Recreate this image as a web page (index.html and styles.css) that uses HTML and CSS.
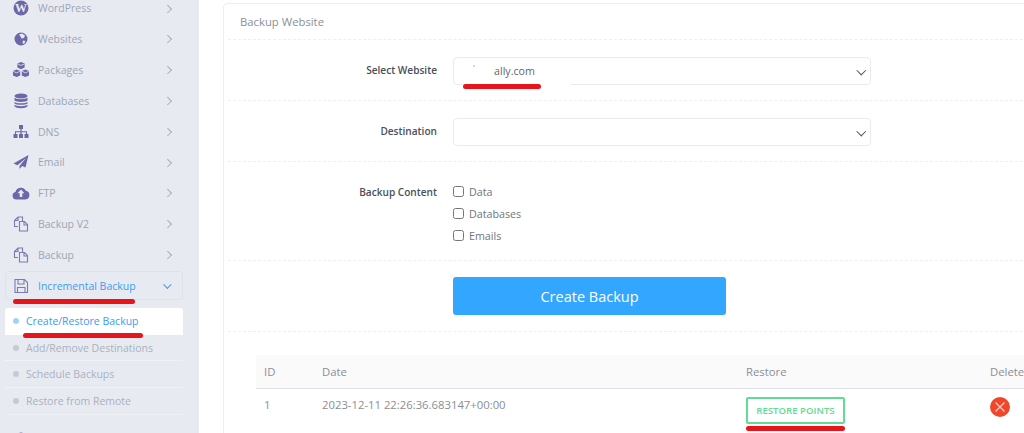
FILE: index.html
```html
<!DOCTYPE html>
<html lang="en">
<head>
<meta charset="utf-8">
<title>Backup Website</title>
<link rel="stylesheet" href="styles.css">
</head>
<body>
<div class="app">
  <aside class="sidebar">
    <nav class="nav">
      <a class="item"><svg class="ico" viewBox="0 0 16 16"><circle cx="8" cy="8" r="7.5"/><text x="8" y="12" class="wp">W</text></svg><span class="lbl">WordPress</span><span class="chev"></span></a>
      <a class="item"><svg class="ico" viewBox="0 0 16 16"><circle cx="8" cy="8" r="6.5"/><path class="cut" d="M6 3.500l3-1 3 2-1 2.500-2.500.5-1-2zM10 9.500l2.500.5-1.500 3-1.500-1z"/></svg><span class="lbl">Websites</span><span class="chev"></span></a>
      <a class="item"><svg class="ico wide" viewBox="0 0 18 16"><path d="M9 0l3.600 1.600v4L9 7.200 5.400 5.600v-4zM4.600 7.400l3.600 1.600v4.400L4.600 15 1 13.400V9zM13.400 7.400L17 9v4.400L13.400 15l-3.600-1.600V9z"/><path class="seam" d="M5.800 2L9 3.400 12.200 2M1.400 9.400l3.200 1.400 3.200-1.400M10.200 9.400l3.200 1.400 3.200-1.400"/></svg><span class="lbl">Packages</span><span class="chev"></span></a>
      <a class="item"><svg class="ico" viewBox="0 0 16 16"><ellipse cx="8" cy="3" rx="6.500" ry="2.600"/><path d="M1.500 4.800C3 6.600 13 6.600 14.500 4.800V7.600C13 9.400 3 9.400 1.500 7.600zM1.500 9C3 10.800 13 10.800 14.500 9V10.500C13 12.300 3 12.300 1.500 10.500zM1.500 11.800C3 13.600 13 13.600 14.500 11.800V13.200C13 15.800 3 15.800 1.500 13.200z"/></svg><span class="lbl">Databases</span><span class="chev"></span></a>
      <a class="item"><svg class="ico" viewBox="0 0 16 16"><path d="M6 1h4v4H8.600v2.200H14V10h1.500v4h-4v-4H13V8.300H8.600V10H10v4H6v-4h1.400V8.300H3V10h1.500v4h-4v-4H2V7.200h5.400V5H6z"/></svg><span class="lbl">DNS</span><span class="chev"></span></a>
      <a class="item"><svg class="ico" viewBox="0 0 16 16"><path d="M15.500 1L.5 9.500l4 1.700L13 4 6.500 12v3l2.600-3 3.400 1.500z"/></svg><span class="lbl">Email</span><span class="chev"></span></a>
      <a class="item"><svg class="ico wide" viewBox="0 0 18 16"><path d="M4.500 14.500A3.800 3.800 0 0 1 3.500 7 5.500 5.500 0 0 1 13.800 5.800 4.400 4.400 0 0 1 13.500 14.500z"/><path class="cut" d="M9 4.500l3.500 3.700h-2.200V12H7.700V8.200H5.500z"/></svg><span class="lbl">FTP</span><span class="chev"></span></a>
      <a class="item"><svg class="ico line" viewBox="0 0 16 16"><path d="M5 10.500H1.500V4.500L5 1H9.500V5M1.500 4.500H5V1.500M6.500 5.500H11.500L14.500 8.500V15H6.500zM11 5.500V9H14.500"/></svg><span class="lbl">Backup V2</span><span class="chev"></span></a>
      <a class="item"><svg class="ico line" viewBox="0 0 16 16"><path d="M5 10.500H1.500V4.500L5 1H9.500V5M1.500 4.500H5V1.500M6.500 5.500H11.500L14.500 8.500V15H6.500zM11 5.500V9H14.500"/></svg><span class="lbl">Backup</span><span class="chev"></span></a>
      <a class="item active"><svg class="ico line" viewBox="0 0 16 16"><path d="M2 1.500H11.500L14.500 4.500V14.500H2zM5 1.500V6H11V1.500M4.500 14.500V9.500H12V14.500"/></svg><span class="lbl">Incremental Backup</span><span class="chev down"></span></a>
      <ul class="sub">
        <li class="sub-item current">Create/Restore Backup</li>
        <li class="sub-item">Add/Remove Destinations</li>
        <li class="sub-item">Schedule Backups</li>
        <li class="sub-item">Restore from Remote</li>
      </ul>
      <a class="item after"><svg class="ico" viewBox="0 0 16 16"><circle cx="8" cy="4" r="3.500"/><path d="M1.500 15c0-8 13-8 13 0z"/></svg></a>
    </nav>
    <span class="mark mark-inc"></span>
    <span class="mark mark-create"></span>
  </aside>
  <main class="main">
    <section class="card">
      <h2 class="card-title">Backup Website</h2>
      <div class="row">
        <label class="field-label">Select Website</label>
        <div class="control">
          <select class="select site"><option>ally.com</option></select>
          <span class="speck"></span>
          <span class="border-patch"></span>
          <span class="mark mark-site"></span>
        </div>
      </div>
      <div class="row">
        <label class="field-label">Destination</label>
        <div class="control"><select class="select"><option></option></select></div>
      </div>
      <div class="row row-checks">
        <label class="field-label">Backup Content</label>
        <div class="checks">
          <label class="check"><input type="checkbox"> Data</label>
          <label class="check"><input type="checkbox"> Databases</label>
          <label class="check"><input type="checkbox"> Emails</label>
        </div>
      </div>
      <div class="row row-action">
        <button class="create" type="button">Create Backup</button>
      </div>
      <table class="table">
        <thead>
          <tr><th class="c-id">ID</th><th class="c-date">Date</th><th class="c-restore">Restore</th><th class="c-del">Delete</th></tr>
        </thead>
        <tbody>
          <tr>
            <td>1</td>
            <td>2023-12-11 22:26:36.683147+00:00</td>
            <td class="restore-cell"><button class="restore" type="button">RESTORE POINTS</button><span class="mark mark-restore"></span></td>
            <td><svg class="del" viewBox="0 0 20 20"><circle cx="10" cy="10" r="10"/><path d="M5.500 5.500l9 9M14.500 5.500l-9 9"/></svg></td>
          </tr>
        </tbody>
      </table>
    </section>
  </main>
</div>
</body>
</html>
```

FILE: styles.css
```css
* { box-sizing: border-box; }
html, body { margin: 0; height: 433px; overflow: hidden; background: #fff; }
body { font-family: "Open Sans", "Liberation Sans", sans-serif; }

.app { display: flex; height: 433px; overflow: hidden; }

/* Sidebar */
.sidebar { position: relative; flex: 0 0 199px; background: #e8eaf1; overflow: hidden; }
.nav { margin-top: -7px; }
.item { display: flex; align-items: center; height: 30.8px; padding-left: 13px; font-size: 10.5px; color: #9ba6b6; }
.ico { flex: 0 0 16px; width: 16px; height: 16px; fill: #6b67a9; }
.ico.wide { flex-basis: 18px; width: 18px; margin-left: -1px; margin-right: -1px; }
.ico .cut { fill: #e8eaf1; }
.ico .seam { fill: none; stroke: #e8eaf1; stroke-width: .8; }
.ico .wp { font-family: "Liberation Serif", serif; font-size: 12px; font-weight: 700; fill: #e8eaf1; text-anchor: middle; }
.ico.line { fill: none; stroke: #7d79b3; stroke-width: 1.1; }
.lbl { margin-left: 9px; flex: 1; }
.chev { flex: 0 0 34px; }
.chev::before { content: ""; display: block; width: 4.5px; height: 4.5px; border-top: 1.2px solid #a3adbc; border-right: 1.2px solid #a3adbc; transform: rotate(45deg); }
.item.active { height: 29px; margin: 1px 16px 0 5px; padding-left: 7px; background: #e8eaf1; border: 1px solid #dfe2ea; border-radius: 3px; color: #3d9cf2; }
.item.active .chev { flex-basis: 17px; }
.item.active .chev::before { border-color: #3d9cf2; transform: rotate(135deg); margin-top: -2px; }
.sub { list-style: none; margin: 8px 16px 0 5px; padding: 0; border-radius: 3px; border-bottom: 1px solid #f0f1f6; }
.sub-item { position: relative; height: 26.5px; line-height: 27px; padding-left: 21px; font-size: 10.5px; color: #a9b2c0; border-bottom: 1px solid #f0f1f6; }
.sub-item:last-child { border-bottom: 0; }
.sub-item::before { content: ""; position: absolute; left: 8px; top: 10px; width: 6px; height: 6px; border-radius: 50%; background: #c6cad6; }
.sub-item.current { background: #fff; color: #3d9cf2; border-bottom: 0; border-radius: 3px 3px 0 0; }
.sub-item.current::before { background: #a6d2f8; }
.item.after { margin-top: 9px; }

/* Red annotation strokes */
.mark { position: absolute; background: #e8141c; border-radius: 3px; height: 5px; }
.mark-inc { left: 13px; top: 299px; width: 122px; }
.mark-create { left: 23px; top: 333px; width: 120px; }
.mark-site { left: 10px; top: 27px; width: 78px; }
.mark-restore { left: 8px; top: 37px; width: 99px; }

/* Main */
.main { flex: 1; min-width: 0; padding: 3px 0 0 24px; }
.card { width: 830px; height: 460px; border: 1px solid #eceef4; border-radius: 4px; padding: 0 4px; }
.card-title { margin: 0; height: 36px; padding-left: 12px; font-size: 11.3px; line-height: 35px; font-weight: 400; color: #8b8f97; border-bottom: 1px dashed #eeeff3; }
.row { display: flex; align-items: center; height: 61px; padding-top: 2px; border-bottom: 1px dashed #eeeff3; }
.field-label { flex: 0 0 209px; margin-bottom: 2px; text-align: right; font-size: 10.1px; font-weight: 600; color: #4a4f5a; }
.control { position: relative; margin-left: 16px; width: 418px; }
.control::after { content: ""; position: absolute; right: 7px; top: 9.5px; width: 5.5px; height: 5.5px; border-right: 1.6px solid #4a4f5a; border-bottom: 1.6px solid #4a4f5a; transform: rotate(45deg); pointer-events: none; }
.select { display: block; width: 100%; height: 28px; padding: 0 0 0 40px; appearance: none; font: 400 10.7px "Open Sans", "Liberation Sans", sans-serif; color: #5f6670; background: #fff; border: 1px solid #e8ebf2; border-radius: 4px; }
.speck { position: absolute; left: 20px; top: 8px; width: 2px; height: 2px; background: #d5d8de; }
.border-patch { position: absolute; left: 88px; top: 26px; width: 30px; height: 3px; background: #fff; }

.row-checks { height: 99px; align-items: flex-start; padding-top: 23px; }
.row-checks .field-label { margin-bottom: 0; }
.checks { margin-left: 16px; margin-top: -2px; display: flex; flex-direction: column; gap: 5px; }
.check { display: flex; align-items: center; height: 17px; font-size: 10.7px; color: #6f7580; }
.check input { width: 11px; height: 11px; margin: 0 5px 0 0; }
.row-action { height: 71px; padding-left: 225px; align-items: flex-start; padding-top: 16px; }
.create { width: 273px; height: 38px; border: 0; border-radius: 3px; background: #33a6ff; color: #fff; font: 400 14.5px "Open Sans", "Liberation Sans", sans-serif; }

/* Table */
.table { margin: 23px 0 0 28px; width: 800px; border-collapse: collapse; table-layout: fixed; font-size: 11.3px; color: #8a8e96; }
.table th { height: 33px; padding: 0 0 0 8px; text-align: left; font-weight: 400; background: #fafafb; border-bottom: 1px solid #dde2ec; }
.table td { padding: 6px 0 0 8px; vertical-align: top; line-height: 20px; }
.c-id { width: 58px; }
.c-date { width: 424px; }
.c-restore { width: 244px; }
.restore-cell { position: relative; }
.restore { display: block; width: 99px; height: 27px; margin-top: 2px; padding: 0; border: 2px solid #62db95; border-radius: 2px; background: #fff; color: #62db95; font: 600 9.6px "Open Sans", "Liberation Sans", sans-serif; }
.del { display: block; width: 20px; height: 20px; margin-top: 2px; }
.del circle { fill: #f0462c; }
.del path { fill: none; stroke: #fbd2c8; stroke-width: 1.2; }
```
